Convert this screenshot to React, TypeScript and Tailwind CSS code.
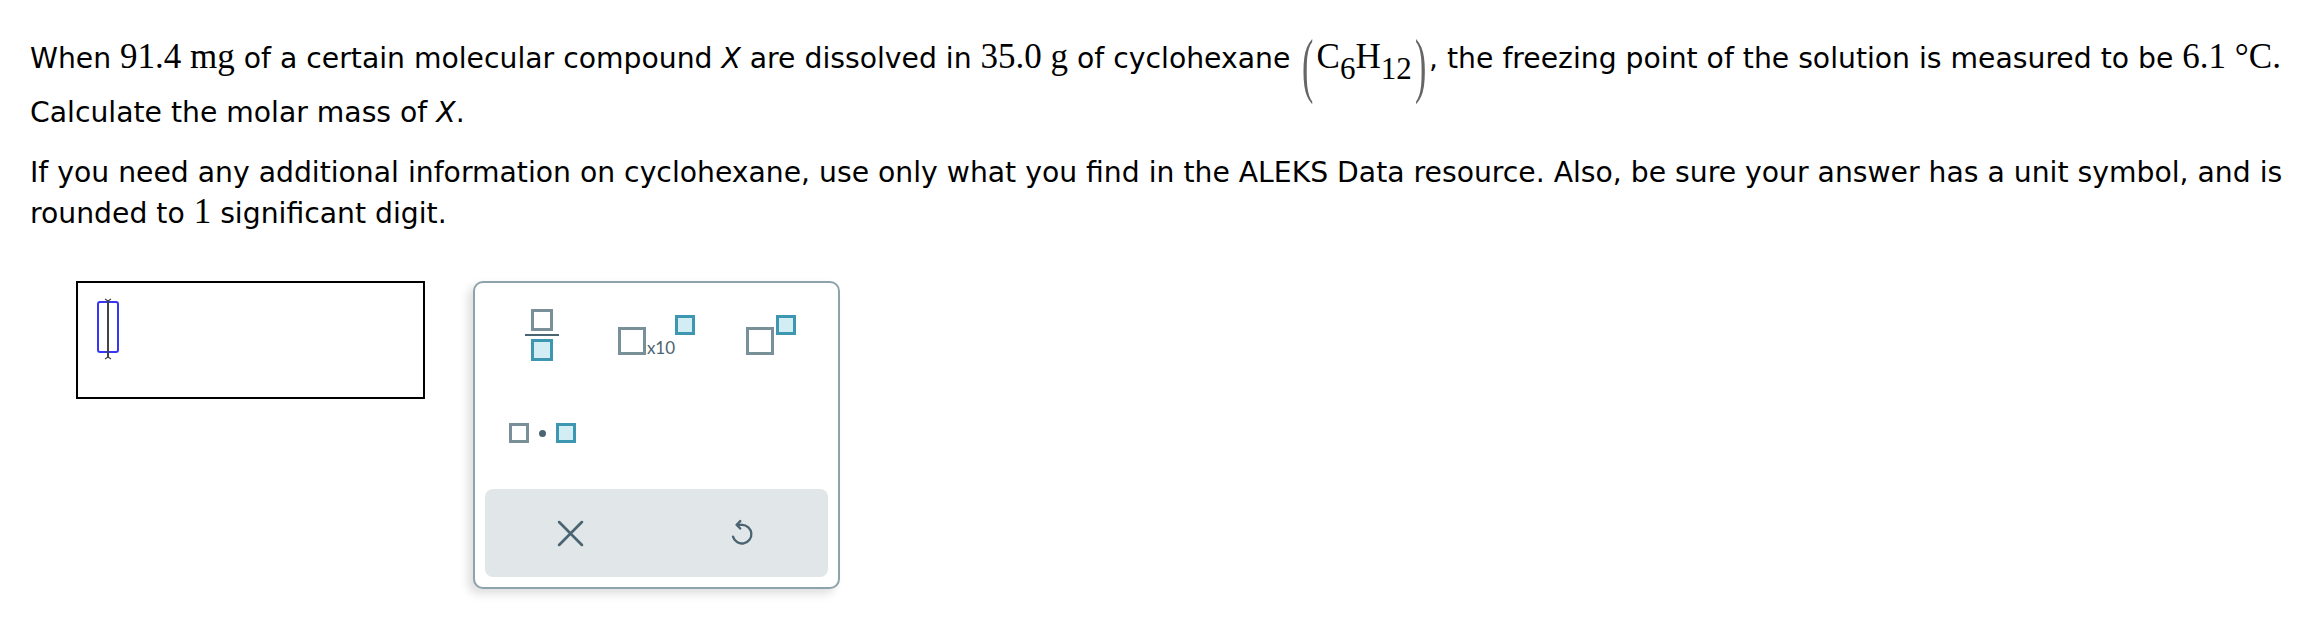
import type { ReactNode } from 'react';

const SERIF = "font-['Liberation_Serif','Times_New_Roman',serif]";

function M({ children }: { children: ReactNode }) {
  return <span className={`${SERIF} text-[35px] leading-[36px]`}>{children}</span>;
}

function Paren({ children }: { children: ReactNode }) {
  return (
    <span
      className={`${SERIF} mx-[2px] inline-block text-[40px] leading-[0] text-[#666] scale-x-[0.85] scale-y-[1.8] align-[-11px]`}
    >
      {children}
    </span>
  );
}

function Formula() {
  return (
    <span className="whitespace-nowrap">
      {/* first line of the question is taller because of the stretchy parens */}
      <span className="inline-block h-[55px] w-0 align-[-24px]" />
      <Paren>(</Paren>
      <span className={`${SERIF} text-[35px] leading-[36px]`}>
        C<span className="text-[31px] align-[-11px]">6</span>H
        <span className="text-[31px] align-[-11px]">12</span>
      </span>
      <Paren>)</Paren>
    </span>
  );
}

function GraySq({ size = 'w-[28px] h-[28px]' }: { size?: string }) {
  return <span className={`block ${size} border-[3px] border-[#7a9099] bg-white`} />;
}

function TealSq({ size = 'w-[20px] h-[20px]' }: { size?: string }) {
  return <span className={`block ${size} border-[3px] border-[#3e97b1] bg-[#d3edf4]`} />;
}

function Keypad() {
  return (
    <div className="flex h-[308px] w-[367px] flex-col rounded-[10px] border-2 border-[#8ea2ac] bg-white px-[10px] pt-[3px] pb-[10px] shadow-[-5px_5px_10px_rgba(0,0,0,0.13)]">
      <div className="grid h-[98px] grid-cols-3 items-center">
        {/* fraction */}
        <div className="flex flex-col items-center justify-center gap-[3px]">
          <GraySq size="w-[22px] h-[22px]" />
          <span className="block h-[2px] w-[34px] bg-[#4b6471]" />
          <TealSq size="w-[22px] h-[22px]" />
        </div>
        {/* scientific notation */}
        <div className="flex items-start justify-center">
          <div className="mt-[12px] flex items-end">
            <GraySq />
            <span className="ml-[1px] mb-[-1px] font-['Lato','Open_Sans',sans-serif] text-[17px] leading-[17px] text-[#4b6471]">x10</span>
          </div>
          <TealSq />
        </div>
        {/* superscript */}
        <div className="flex items-start justify-center gap-[2px]">
          <div className="mt-[12px]">
            <GraySq />
          </div>
          <TealSq />
        </div>
      </div>
      <div className="grid h-[98px] grid-cols-3 items-center">
        <div className="flex items-center justify-center gap-[10px]">
          <GraySq size="w-[20px] h-[20px]" />
          <span className="block h-[7px] w-[7px] rounded-full bg-[#4b6471]" />
          <TealSq size="w-[20px] h-[20px]" />
        </div>
      </div>
      <div className="mt-[7px] grid flex-1 grid-cols-2 items-center rounded-[8px] bg-[#e1e6e9]">
        <div className="flex justify-center">
          <svg width="27" height="27" viewBox="0 0 26 26" fill="none" stroke="#4b6471" strokeWidth="2.6" strokeLinecap="round">
            <path d="M2 2L24 24M24 2L2 24" />
          </svg>
        </div>
        <div className="flex justify-center">
          <svg width="28" height="28" viewBox="0 0 24 24" fill="none" stroke="#4b6471" strokeWidth="2" strokeLinecap="round" strokeLinejoin="round">
            <path d="M12 5A8 8 0 1 1 4.3 15.1" />
            <path d="M10.5 1.8L7.5 5L10.5 8.2" />
            <path d="M7.5 5H12" />
          </svg>
        </div>
      </div>
    </div>
  );
}

export default function App() {
  return (
    <div className="min-h-[630px] w-full bg-white font-['DejaVu_Sans',Verdana,sans-serif] text-black">
      <div className="px-[30px] pt-[37px]">
        <p className="text-[28.25px] leading-[41px]">
          When <M>91.4 mg</M> of a certain molecular compound <i>X</i> are dissolved in <M>35.0 g</M> of cyclohexane{' '}
          <Formula />, the freezing point of the solution is measured to be <M>6.1 °C.</M>
          <br />
          Calculate the molar mass of <i>X</i>.
        </p>
        <p className="mt-[19px] text-[28.25px] leading-[41px]">
          If you need any additional information on cyclohexane, use only what you find in the ALEKS Data resource. Also, be
          sure your answer has a unit symbol, and is rounded to <M>1</M> significant digit.
        </p>

        <div className="mt-[47px] flex items-start">
          {/* answer box */}
          <div className="ml-[46px] h-[118px] w-[349px] border-2 border-black pl-[19px] pt-[18px]">
            <div className="relative h-[52px] w-[22px] rounded-[3px] border-2 border-[#3636f4]">
              <svg className="absolute left-[4px] top-[-5px]" width="10" height="62" viewBox="0 0 10 62" fill="none" stroke="#444" strokeWidth="2">
                <path d="M5 2V60" />
                <path d="M2 1L5 3L8 1M2 61L5 59L8 61" strokeWidth="1.2" />
              </svg>
            </div>
          </div>
          <div className="ml-[48px]">
            <Keypad />
          </div>
        </div>
      </div>
    </div>
  );
}
